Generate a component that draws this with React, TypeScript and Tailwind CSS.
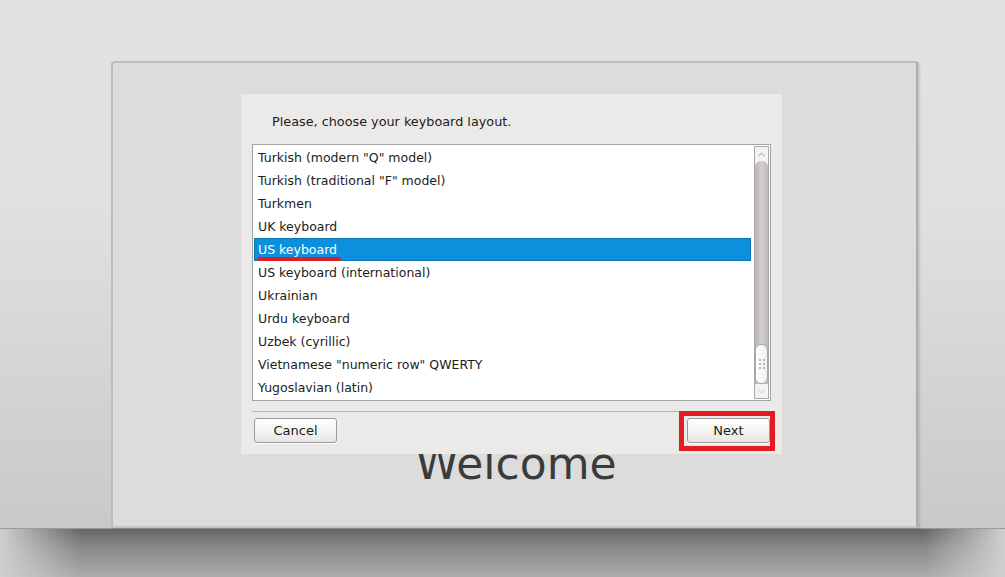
import { ChevronUp, ChevronDown } from 'lucide-react';

const layouts = [
  'Turkish (modern "Q" model)',
  'Turkish (traditional "F" model)',
  'Turkmen',
  'UK keyboard',
  'US keyboard',
  'US keyboard (international)',
  'Ukrainian',
  'Urdu keyboard',
  'Uzbek (cyrillic)',
  'Vietnamese "numeric row" QWERTY',
  'Yugoslavian (latin)',
];

const selected = 'US keyboard';

const Scrollbar = () => (
  <div className="w-[15px] h-full flex flex-col border border-[#a8a8a8] bg-[#f4f3f2]">
    <div className="h-[14px] flex items-center justify-center text-[#6e6e6e]">
      <ChevronUp size={11} strokeWidth={1.6} />
    </div>
    <div className="flex-1 flex flex-col rounded-t-[6px] bg-[linear-gradient(to_right,#bab5b5,#d4d0d0_50%,#bfbaba)]">
      <div className="flex-1" />
      <div className="h-[40px] rounded-[6px] border border-[#aaa6a6] bg-[linear-gradient(to_right,#ffffff,#f0f0f0)] flex items-center justify-center">
        <div className="grid grid-cols-2 gap-[2px]">
          {[0, 1, 2, 3, 4, 5].map((i) => (
            <div key={i} className="w-[2px] h-[2px] bg-[#b8b8b8]" />
          ))}
        </div>
      </div>
    </div>
    <div className="h-[14px] flex items-center justify-center text-[#b0b0b0]">
      <ChevronDown size={11} strokeWidth={1.4} />
    </div>
  </div>
);

const Button = ({ label }: { label: string }) => (
  <button className="w-[83px] h-[25px] rounded-[3px] border border-[#9c9c9c] bg-[linear-gradient(to_bottom,#ffffff,#f3f2f1_60%,#e6e5e3)] text-[13px] text-[#1a1a1a] shadow-[0_1px_0_#ffffff]">
    {label}
  </button>
);

const KeyboardDialog = () => (
  <div className="relative z-10 ml-[128px] w-[541px] h-[360px] bg-[#ebeae8] flex flex-col px-[11px] pt-[19px]">
    <p className="ml-[20px] pt-px text-[12.8px] leading-[16px] text-[#1c1c1c]">Please, choose your keyboard layout.</p>

    <div className="mt-[14px] h-[257px] border border-[#a3a3a3] bg-white p-[1px] flex">
      <ul className="flex-1">
        {layouts.map((name) => (
          <li
            key={name}
            className={
              name === selected
                ? 'relative h-[23px] pl-[3px] pt-px flex items-center text-[12.5px] text-white bg-[#0a90dd] border border-[#0b75b8]'
                : 'h-[23px] pl-[4px] pt-[2px] flex items-center text-[12.5px] text-[#1c1c1c]'
            }
          >
            {name}
            {name === selected && (
              <span className="absolute left-[2px] top-[18px] w-[84px] h-[4px] rounded-[2px] bg-[#e31c24]" />
            )}
          </li>
        ))}
      </ul>
      <div className="ml-[3px] h-full">
        <Scrollbar />
      </div>
    </div>

    <div className="mt-[10px] h-px bg-[#b6b5b3]" />

    <div className="mt-[6px] flex justify-between pl-[2px] pr-[1px]">
      <Button label="Cancel" />
      <div className="relative">
        <Button label="Next" />
        <span className="absolute -left-[8px] -top-[7px] w-[96px] h-[40px] border-[5px] border-[#e31c24]" />
      </div>
    </div>
  </div>
);

export default function App() {
  return (
    <div className="w-[1005px] h-[577px] overflow-hidden flex flex-col font-['DejaVu_Sans',sans-serif]">
      <div className="h-[529px] pt-[61px] pl-[111px] bg-[linear-gradient(to_bottom,#e2e2e2,#e0e0e0_40%,#c9c9c9)] border-b border-[#9a9a9a]">
        <div className="w-[807px] h-[467px] rounded-tl-[4px] border-2 border-[#bcbcbc] border-r-[#acacac] border-b-[#c4c4c4] bg-[#dcdcdc] pt-[31px] shadow-[2px_2px_2px_rgba(0,0,0,0.12)]">
          <KeyboardDialog />
          <h1 className="-mt-[12px] ml-[3px] text-center text-[44px] leading-none text-[#3b3b3b]">Welcome</h1>
        </div>
      </div>
      <div className="flex-1 bg-[linear-gradient(to_right,#cfcfcf,rgba(0,0,0,0)_8%,rgba(0,0,0,0)_92%,#d0d0d0),linear-gradient(to_bottom,#666666,#8a8a8a_40%,#acacac)]" />
    </div>
  );
}
